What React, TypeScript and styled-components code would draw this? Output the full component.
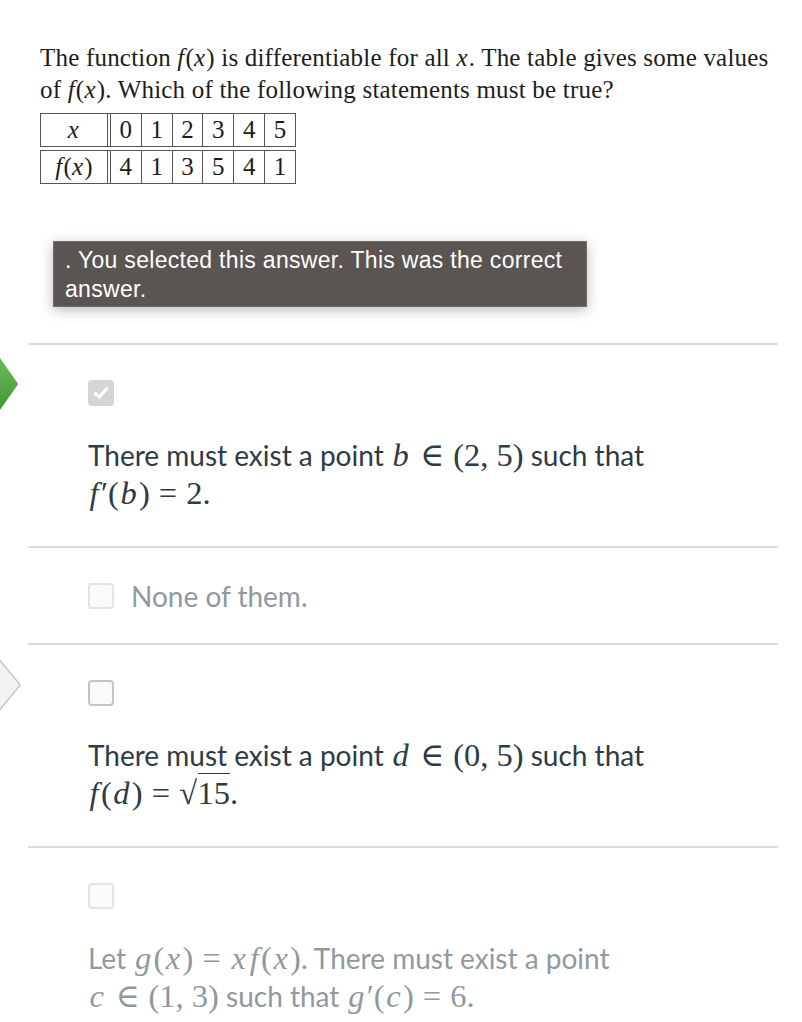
import styled, { createGlobalStyle } from 'styled-components';

const GlobalStyle = createGlobalStyle`
  html, body {
    margin: 0;
    padding: 0;
    background: #fff;
  }
  body {
    font-family: Lato, "Noto Sans", sans-serif;
  }
`;

const Page = styled.div`
  width: 802px;
  padding-top: 42px;
  overflow: hidden;
`;

const Question = styled.div`
  padding-left: 40px;
  font-family: "Liberation Serif", serif;
  font-size: 25px;
  line-height: 32px;
  letter-spacing: 0.2px;
  color: #1c1c1c;
  white-space: nowrap;
`;

const ValueTable = styled.div`
  margin-top: 7px;
  width: 256px;
  display: flex;
  flex-direction: column;
  gap: 3px;
`;

const TableRow = styled.div`
  display: flex;
  height: 34px;
  box-sizing: border-box;
  border: 1px solid #555;
`;

const HeadCell = styled.div`
  width: 66px;
  border-right: 4px double #555;
  display: flex;
  align-items: center;
  justify-content: center;
`;

const Cell = styled.div`
  flex: 1;
  display: flex;
  align-items: center;
  justify-content: center;
  & + & {
    border-left: 1px solid #555;
  }
`;

const Tooltip = styled.div`
  margin: 57px 0 0 53px;
  width: 534px;
  box-sizing: border-box;
  padding: 4px 10px 2px 11px;
  background: #5a5553;
  border: 1px solid #716d6b;
  box-shadow: 0 3px 12px rgba(0, 0, 0, 0.28);
  color: #fff;
  font-family: "Liberation Sans", Arial, sans-serif;
  font-size: 23px;
  line-height: 29px;
  letter-spacing: 0.3px;
  white-space: nowrap;
`;

const AnswerList = styled.div`
  margin: 36px 24px 0 28px;
`;

const Answer = styled.div<{ $faded?: boolean }>`
  position: relative;
  border-top: 2px solid #dcdcdc;
  padding: 35px 0 34px 60px;
  color: ${(p) => (p.$faded ? '#8f999f' : '#2d3b45')};
  font-size: 28px;
  line-height: 38px;
`;

const CheckRow = styled.div`
  display: flex;
  align-items: center;
  gap: 17px;
  height: 26px;
`;

const Checkbox = styled.span<{ $checked?: boolean; $light?: boolean }>`
  flex: none;
  width: 26px;
  height: 26px;
  box-sizing: border-box;
  border-radius: 4px;
  display: flex;
  align-items: center;
  justify-content: center;
  background: ${(p) => (p.$checked ? '#d5d5d5' : '#fafafa')};
  border: ${(p) =>
    p.$checked ? 'none' : `2px solid ${p.$light ? '#e4e4e4' : '#c4c4c4'}`};
`;

const AnswerText = styled.div`
  margin-top: 30px;
  white-space: nowrap;
`;

const Marker = styled.svg`
  position: absolute;
  left: -28px;
  top: 11px;
`;

const Math = styled.span`
  font-family: "Liberation Serif", "DejaVu Serif", serif;
  font-size: 1.16em;
  line-height: 1;
  white-space: nowrap;
`;

// italic variable inside the question text
const V = styled.i`
  font-style: italic;
  padding-right: 0.04em;
`;

// italic variable inside answer math, a bit wider like the TeX italics
const Var = styled.i`
  font-style: italic;
  padding: 0 0.07em 0 0.05em;
`;

const Rel = styled.span`
  margin: 0 0.28em;
`;

const Radicand = styled.span`
  border-top: 1.5px solid currentColor;
  padding-top: 1px;
  margin-left: 0.02em;
`;

function CheckMark() {
  return (
    <svg width="18" height="18" viewBox="0 0 18 18">
      <path d="M3.5 9.5 L7.3 13.2 L14.6 4.8" fill="none" stroke="#fff" strokeWidth="3.2" strokeLinecap="round" strokeLinejoin="round" />
    </svg>
  );
}

function CorrectMarker() {
  return (
    <Marker width="20" height="56" viewBox="0 0 20 56">
      <defs>
        <linearGradient id="green" x1="0" y1="0" x2="0" y2="1">
          <stop offset="0" stopColor="#6dbb58" />
          <stop offset="1" stopColor="#45953a" />
        </linearGradient>
      </defs>
      <path d="M0 2 L17.5 27 Q18.5 28 17.5 29 L0 54 Z" fill="url(#green)" />
    </Marker>
  );
}

function MissedMarker() {
  return (
    <Marker width="22" height="58" viewBox="0 0 22 58">
      <path d="M-2 2 L19.5 28 Q20.3 29 19.5 30 L-2 56 Z" fill="#f3f3f3" stroke="#c9c9c9" strokeWidth="1.6" />
    </Marker>
  );
}

const xs = [0, 1, 2, 3, 4, 5];
const fx = [4, 1, 3, 5, 4, 1];

export default function App() {
  return (
    <Page>
      <GlobalStyle />
      <Question>
        The function <V>f</V>(<V>x</V>) is differentiable for all <V>x</V>. The table gives some values
        <br />
        of <V>f</V>(<V>x</V>). Which of the following statements must be true?
        <ValueTable>
          <TableRow>
            <HeadCell>
              <V>x</V>
            </HeadCell>
            {xs.map((v) => (
              <Cell key={v}>{v}</Cell>
            ))}
          </TableRow>
          <TableRow>
            <HeadCell>
              <span>
                <V>f</V>(<V>x</V>)
              </span>
            </HeadCell>
            {fx.map((v, i) => (
              <Cell key={i}>{v}</Cell>
            ))}
          </TableRow>
        </ValueTable>
      </Question>

      <Tooltip>
        . You selected this answer. This was the correct
        <br />
        answer.
      </Tooltip>

      <AnswerList>
        <Answer>
          <CorrectMarker />
          <CheckRow>
            <Checkbox $checked>
              <CheckMark />
            </Checkbox>
          </CheckRow>
          <AnswerText>
            There must exist a point{' '}
            <Math>
              <Var>b</Var>
              <Rel>∈</Rel>(2, 5)
            </Math>{' '}
            such that
            <br />
            <Math>
              <Var>f</Var>′(<Var>b</Var>)<Rel>=</Rel>2.
            </Math>
          </AnswerText>
        </Answer>

        <Answer $faded>
          <CheckRow>
            <Checkbox $light />
            <span>None of them.</span>
          </CheckRow>
        </Answer>

        <Answer>
          <MissedMarker />
          <CheckRow>
            <Checkbox />
          </CheckRow>
          <AnswerText>
            There must exist a point{' '}
            <Math>
              <Var>d</Var>
              <Rel>∈</Rel>(0, 5)
            </Math>{' '}
            such that
            <br />
            <Math>
              <Var>f</Var>(<Var>d</Var>)<Rel>=</Rel>√<Radicand>15</Radicand>.
            </Math>
          </AnswerText>
        </Answer>

        <Answer $faded>
          <CheckRow>
            <Checkbox $light />
          </CheckRow>
          <AnswerText>
            Let{' '}
            <Math>
              <Var>g</Var>(<Var>x</Var>)<Rel>=</Rel>
              <Var>x</Var>
              <Var>f</Var>(<Var>x</Var>)
            </Math>
            . There must exist a point
            <br />
            <Math>
              <Var>c</Var>
              <Rel>∈</Rel>(1, 3)
            </Math>{' '}
            such that{' '}
            <Math>
              <Var>g</Var>′(<Var>c</Var>)<Rel>=</Rel>6.
            </Math>
          </AnswerText>
        </Answer>
      </AnswerList>
    </Page>
  );
}
